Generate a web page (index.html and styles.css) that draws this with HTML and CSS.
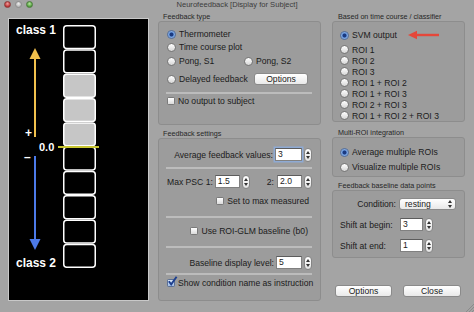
FILE: index.html
```html
<!DOCTYPE html>
<html lang="en">
<head>
    <meta charset="UTF-8">
    <meta name="viewport" content="width=device-width, initial-scale=1.0">
    <title>Neurofeedback [Display for Subject]</title>
    <link rel="stylesheet" href="styles.css">
</head>
<body>
<div class="window">
    <div class="titlebar">
        <div class="lights">
            <span class="light red"></span><span class="light grey"></span><span class="light green"></span>
        </div>
        <div class="title">Neurofeedback [Display for Subject]</div>
        <div></div>
    </div>

    <div class="main">
        <!-- subject display -->
        <div class="display">
            <svg width="139" height="281" viewBox="0 0 139 281">
                <g stroke="#fff" stroke-width="1.5" fill="none">
                    <rect x="54.75" y="6.75" width="31.5" height="22.8" rx="3"/>
                    <rect x="54.75" y="31.05" width="31.5" height="22.8" rx="3"/>
                    <rect x="54.75" y="55.35" width="31.5" height="22.8" rx="3" fill="#c6c6c6"/>
                    <rect x="54.75" y="79.65" width="31.5" height="22.8" rx="3" fill="#c6c6c6"/>
                    <rect x="54.75" y="103.95" width="31.5" height="22.8" rx="3" fill="#c6c6c6"/>
                    <rect x="54.75" y="128.25" width="31.5" height="22.8" rx="3"/>
                    <rect x="54.75" y="152.55" width="31.5" height="22.8" rx="3"/>
                    <rect x="54.75" y="176.85" width="31.5" height="22.8" rx="3"/>
                    <rect x="54.75" y="201.15" width="31.5" height="22.8" rx="3"/>
                    <rect x="54.75" y="225.45" width="31.5" height="22.8" rx="3"/>
                </g>
                <line x1="49" y1="128" x2="90" y2="128" stroke="#c9c631" stroke-width="2"/>
                <line x1="26" y1="39" x2="26" y2="118" stroke="#f1c04c" stroke-width="2"/>
                <polygon points="26,29 20.5,40 31.5,40" fill="#f1c04c"/>
                <line x1="26" y1="137" x2="26" y2="221" stroke="#4c7ae9" stroke-width="2"/>
                <polygon points="26,231 20.5,220 31.5,220" fill="#4c7ae9"/>
                <g fill="#fff" font-family="Liberation Sans, Arial, sans-serif" font-weight="bold">
                    <text x="7" y="15" font-size="12">class 1</text>
                    <text x="16" y="118" font-size="12">+</text>
                    <text x="30" y="132" font-size="11">0.0</text>
                    <text x="15" y="142" font-size="12">–</text>
                    <text x="7" y="248" font-size="12">class 2</text>
                </g>
            </svg>
        </div>

        <!-- left settings column -->
        <div class="col col-left">
            <div class="group-label">Feedback type</div>
            <div class="group type-box">
                <div class="row"><span class="radio on"></span>Thermometer</div>
                <div class="row mt1"><span class="radio"></span>Time course plot</div>
                <div class="row mt2">
                    <span class="opt pong"><span class="radio"></span>Pong, S1</span>
                    <span class="opt"><span class="radio"></span>Pong, S2</span>
                </div>
                <div class="row mt6">
                    <span class="opt delayed"><span class="radio"></span>Delayed feedback</span>
                    <span class="btn small-btn">Options</span>
                </div>
                <div class="sep type-sep"></div>
                <div class="row mt1"><span class="check"></span>No output to subject</div>
            </div>

            <div class="group-label gap4">Feedback settings</div>
            <div class="group settings-box">
                <div class="row field-row right">
                    <span class="lbl">Average feedback values:</span>
                    <span class="field focus w27">3</span>
                    <span class="stepper"><i class="up"></i><i class="down"></i></span>
                </div>
                <div class="sep set-sep mt6"></div>
                <div class="row field-row mt6 psc">
                    <span class="lbl">Max PSC 1:</span>
                    <span class="field w25">1.5</span>
                    <span class="stepper"><i class="up"></i><i class="down"></i></span>
                    <span class="lbl psc2">2:</span>
                    <span class="field w25">2.0</span>
                    <span class="stepper"><i class="up"></i><i class="down"></i></span>
                </div>
                <div class="row right mt7 pr3"><span class="check"></span>Set to max measured</div>
                <div class="sep set-sep mt9"></div>
                <div class="row right mt7 pr4"><span class="check"></span>Use ROI-GLM baseline (b0)</div>
                <div class="sep set-sep mt9"></div>
                <div class="row field-row right mt8">
                    <span class="lbl">Baseline display level:</span>
                    <span class="field w26">5</span>
                    <span class="stepper"><i class="up"></i><i class="down"></i></span>
                </div>
                <div class="sep set-sep mt4"></div>
                <div class="row mt2 pl8">
                    <span class="check on">
                        <svg width="11" height="11" viewBox="0 0 11 11"><path d="M1.8 5.2 L4.2 8.4 L9.6 0.8" fill="none" stroke="#1d3f8f" stroke-width="1.9"/></svg>
                    </span>Show condition name as instruction
                </div>
            </div>
        </div>

        <!-- right settings column -->
        <div class="col col-right">
            <div class="group-label">Based on time course / classifier</div>
            <div class="group classifier-box">
                <div class="row"><span class="radio on"></span>SVM output</div>
                <div class="row mt3 tight"><span class="radio"></span>ROI 1</div>
                <div class="row tight"><span class="radio"></span>ROI 2</div>
                <div class="row tight"><span class="radio"></span>ROI 3</div>
                <div class="row tight"><span class="radio"></span>ROI 1 + ROI 2</div>
                <div class="row tight"><span class="radio"></span>ROI 1 + ROI 3</div>
                <div class="row tight"><span class="radio"></span>ROI 2 + ROI 3</div>
                <div class="row tight"><span class="radio"></span>ROI 1 + ROI 2 + ROI 3</div>
                <svg class="red-arrow" width="32" height="10" viewBox="0 0 32 10">
                    <line x1="7" y1="5" x2="31" y2="5" stroke="#e5473a" stroke-width="2.4"/>
                    <polygon points="0,5 9,0.8 9,9.2" fill="#e5473a"/>
                </svg>
            </div>

            <div class="group-label gap6">Multi-ROI integration</div>
            <div class="group multi-box">
                <div class="row"><span class="radio on"></span>Average multiple ROIs</div>
                <div class="row mt3"><span class="radio"></span>Visualize multiple ROIs</div>
            </div>

            <div class="group-label gap4">Feedback baseline data points</div>
            <div class="group baseline-box">
                <span class="lbl cond-lbl">Condition:</span>
                <span class="select">resting<i class="sel-arrows"><i class="up"></i><i class="down"></i></i></span>
                <span class="lbl">Shift at begin:</span>
                <span class="value"><span class="field w23">3</span><span class="stepper"><i class="up"></i><i class="down"></i></span></span>
                <span class="lbl">Shift at end:</span>
                <span class="value"><span class="field w23">1</span><span class="stepper"><i class="up"></i><i class="down"></i></span></span>
            </div>

            <div class="buttons">
                <span class="btn opt-btn">Options</span>
                <span class="btn close-btn">Close</span>
            </div>
        </div>
    </div>

    <svg class="grip" width="10" height="10" viewBox="0 0 10 10">
        <path d="M2 10 L10 2 M5 10 L10 5 M8 10 L10 8" stroke="#858585" stroke-width="0.8"/>
    </svg>
</div>
</body>
</html>
```

FILE: styles.css
```css
body {
    margin: 0;
    background: #a4a4a4;
    font-family: "Liberation Sans", Arial, sans-serif;
    color: #1b1b1b;
}
.window {
    width: 474px;
    height: 312px;
    position: relative;
    overflow: hidden;
}

/* title bar */
.titlebar {
    height: 12px;
    display: grid;
    grid-template-columns: 1fr auto 1fr;
    align-items: start;
}
.lights {
    display: flex;
    gap: 4px;
    padding: 1px 0 0 4px;
}
.light {
    width: 7px;
    height: 7px;
    border-radius: 50%;
    box-sizing: border-box;
}
.red { background: radial-gradient(circle at 50% 35%, #f2a0a0, #b93030 70%); border: 1px solid #8b3a3a; }
.grey { background: radial-gradient(circle at 50% 35%, #eeeeee, #b5b5b5 70%); border: 1px solid #8e8e8e; }
.green { background: radial-gradient(circle at 50% 35%, #b8e6a0, #4f9d3a 70%); border: 1px solid #4b7a3c; }
.title {
    font-size: 7.6px;
    line-height: 10px;
    color: #3c3c3c;
}

.main {
    display: flex;
    align-items: flex-start;
    padding-left: 8px;
}

/* black subject display */
.display {
    margin-top: 6px;
    width: 139px;
    height: 281px;
    background: #000;
    border: 1px solid #c9c9c9;
}
.display svg {
    display: block;
}

.col-left {
    margin-left: 9px;
    width: 163px;
}
.col-right {
    margin-left: 11px;
    width: 133px;
}
.group-label {
    height: 9px;
    line-height: 9px;
    font-size: 7.2px;
    color: #262626;
    padding-left: 5px;
}
.col-right .group-label {
    padding-left: 6px;
}
.gap4 { margin-top: 4px; }
.gap6 { margin-top: 6px; }

.group {
    background: #9c9c9c;
    border: 1px solid #8d8d8d;
    border-radius: 3px;
    box-sizing: border-box;
    position: relative;
}

.row {
    display: flex;
    align-items: center;
    height: 12px;
    font-size: 8.6px;
    white-space: nowrap;
}
.row.tight { height: 11px; }
.right { justify-content: flex-end; }
.field-row { height: 13px; }
.mt1 { margin-top: 1px; }
.mt2 { margin-top: 2px; }
.mt3 { margin-top: 3px; }
.mt4 { margin-top: 4px; }
.mt6 { margin-top: 6px; }
.mt7 { margin-top: 7px; }
.mt8 { margin-top: 8px; }
.mt9 { margin-top: 9px; }
.pr3 { padding-right: 3px; }
.pr4 { padding-right: 4px; }
.pl8 { padding-left: 8px; }

/* aqua-ish controls */
.radio {
    width: 9px;
    height: 9px;
    border-radius: 50%;
    box-sizing: border-box;
    border: 1px solid #767676;
    background: linear-gradient(#ffffff, #d6d6d6);
    margin-right: 3px;
    flex-shrink: 0;
}
.radio.on {
    border-color: #4e6a98;
    background: radial-gradient(circle, #1b3a80 0 1.6px, #5f8fd6 2.3px, #c3d8f4 4.5px);
}
.check {
    width: 8px;
    height: 8px;
    box-sizing: border-box;
    border: 1px solid #7a7a7a;
    border-radius: 1.5px;
    background: linear-gradient(#ffffff, #dadada);
    margin-right: 3px;
    flex-shrink: 0;
    position: relative;
}
.check.on {
    background: linear-gradient(#d9e6f7, #9fbbe4);
    border-color: #5a7097;
}
.check.on svg {
    position: absolute;
    left: -1px;
    top: -4px;
}
.opt {
    display: flex;
    align-items: center;
}
.pong { width: 77px; }
.delayed { width: 87px; }

.btn {
    display: flex;
    align-items: center;
    justify-content: center;
    height: 12px;
    box-sizing: border-box;
    border: 1px solid #8a8a8a;
    border-radius: 3px;
    background: linear-gradient(#ffffff, #e9e9e9);
    font-size: 8.6px;
    color: #1b1b1b;
}
.small-btn { width: 54px; }

.sep {
    height: 2px;
    background: #bcbcbc;
}
.type-sep {
    margin: 7px 0 0 -1px;
    width: 146px;
}
.set-sep {
    margin-left: 7px;
    width: 146px;
}

.field {
    display: inline-block;
    height: 13px;
    box-sizing: border-box;
    background: #fff;
    border: 1px solid #808080;
    border-top-color: #5c5c5c;
    font-size: 8.6px;
    line-height: 11px;
    padding-left: 2px;
}
.field.focus {
    box-shadow: 0 0 0 1.5px #8eaad4;
}
.w23 { width: 23px; }
.w25 { width: 25px; }
.w26 { width: 26px; }
.w27 { width: 27px; }
.lbl {
    font-size: 8.6px;
    margin-right: 2px;
}
.stepper {
    width: 8px;
    height: 14px;
    box-sizing: border-box;
    border: 1px solid #858585;
    border-radius: 4px;
    background: linear-gradient(#ffffff, #e2e2e2);
    margin-left: 2px;
    display: inline-flex;
    flex-direction: column;
    justify-content: space-between;
    align-items: center;
    padding: 2px 0;
}
.up, .down {
    width: 0;
    height: 0;
    border-left: 2px solid transparent;
    border-right: 2px solid transparent;
}
.up { border-bottom: 3px solid #333; }
.down { border-top: 3px solid #333; }

/* settings box */
.settings-box {
    height: 163px;
    padding: 9px 8px 0 0;
}
.psc {
    padding-left: 8px;
}
.psc .lbl { margin-right: 2px; }
.psc .psc2 {
    margin-left: auto;
    margin-right: 3px;
}

.type-box {
    height: 104px;
    padding: 6px 0 0 8px;
}

/* right column boxes */
.classifier-box {
    height: 101px;
    padding: 7px 0 0 7px;
}
.red-arrow {
    position: absolute;
    left: 75px;
    top: 8px;
}
.multi-box {
    height: 40px;
    padding: 8px 0 0 7px;
}
.baseline-box {
    height: 68px;
    padding: 7px 0 0 7px;
    display: grid;
    grid-template-columns: 57px auto;
    grid-template-rows: 12px 13px 13px;
    column-gap: 3px;
    row-gap: 8px;
    align-items: center;
    justify-items: start;
}
.cond-lbl {
    justify-self: end;
    margin-right: 1px;
}
.value {
    display: flex;
    align-items: center;
}
.select {
    width: 57px;
    height: 12px;
    margin-left: -1px;
    box-sizing: border-box;
    border: 1px solid #8a8a8a;
    border-radius: 3px;
    background: linear-gradient(#ffffff, #e8e8e8);
    font-size: 8.6px;
    line-height: 10px;
    padding-left: 5px;
    position: relative;
}
.sel-arrows {
    position: absolute;
    right: 3px;
    top: 1px;
    height: 8px;
    display: flex;
    flex-direction: column;
    justify-content: space-between;
}

.buttons {
    display: flex;
    gap: 11px;
    margin-top: 27px;
    padding-left: 3px;
}
.opt-btn { width: 57px; }
.close-btn { width: 58px; }

.grip {
    position: absolute;
    right: 0;
    bottom: 0;
}
```
